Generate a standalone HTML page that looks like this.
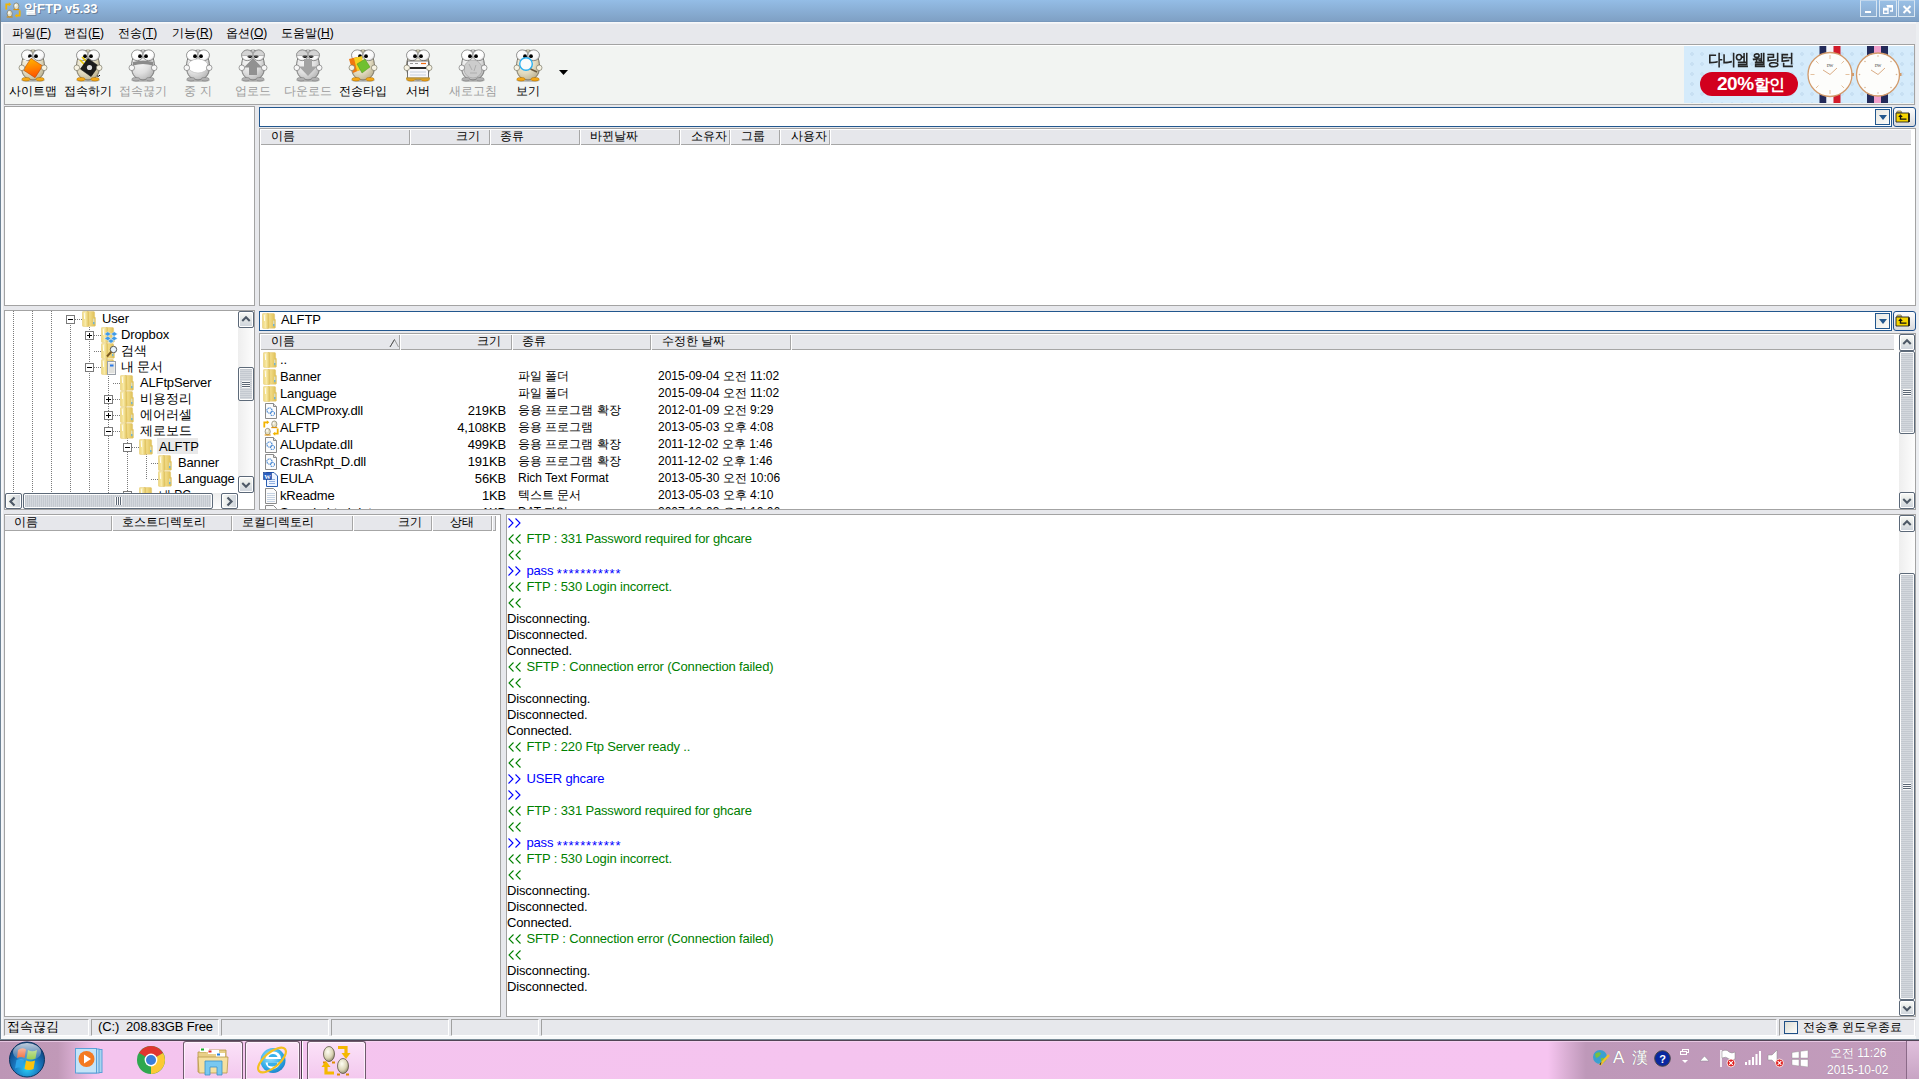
<!DOCTYPE html>
<html><head><meta charset="utf-8">
<style>
*{box-sizing:border-box}
html,body{margin:0;padding:0}
body{width:1919px;height:1079px;overflow:hidden;position:relative;background:#e7e8ec;font-family:"Liberation Sans",sans-serif;font-size:12px;color:#000}
.a{position:absolute}
.t{position:absolute;white-space:nowrap;line-height:14px}
.box{position:absolute;border:1px solid #a3a3a3;background:#fff}
.hd{position:absolute;height:15px;background:#e6e7eb;border-right:1px solid #a6a6a6;border-bottom:1px solid #a6a6a6}
.hdr{position:absolute;height:15px;background:#e6e7eb;border-right:2px solid #b0b0b0;border-bottom:2px solid #a8a8a8;white-space:nowrap;line-height:13px;padding-left:9px}
.lat{font-size:13px;letter-spacing:-.15px}
.sb{position:absolute;border:1px solid #5b6878;border-radius:2px;box-shadow:inset 0 0 0 1px #fff;background:linear-gradient(#fbfbf8 0%,#e9ecea 35%,#cdd3db 100%)}
.sbh{background:linear-gradient(90deg,#fbfbf8 0%,#e9ecea 35%,#cdd3db 100%)}
.tr{position:absolute;background:linear-gradient(90deg,#eeeeee,#fdfdfd)}
.trh{background:linear-gradient(#eeeeee,#fdfdfd)}
.th{position:absolute;border:1px solid #5d6a79;border-radius:2px;box-shadow:inset 0 0 0 1px #fdfdfd;background:repeating-linear-gradient(#d4d8dd 0 1px,#c4c9d0 1px 2px)}
.thh{background:repeating-linear-gradient(90deg,#d4d8dd 0 1px,#c4c9d0 1px 2px)}
.dl{position:absolute;width:1px;background:repeating-linear-gradient(#7a7a7a 0 1px,transparent 1px 2px)}
.dh{position:absolute;height:1px;background:repeating-linear-gradient(90deg,#7a7a7a 0 1px,transparent 1px 2px)}
.cv{vertical-align:-1px;margin-right:1px}
.chv{display:inline-block;letter-spacing:1.2px;transform:translateY(1px) scale(.8,1.55);transform-origin:0 62%;font-weight:normal}
.g{color:#008000}.bl{color:#0000ff}
.dis{color:#a0a0a0}
</style></head><body>

<svg width="0" height="0" style="position:absolute">
<defs>
<linearGradient id="fg1" x1="0" x2="1" y1="0" y2="0"><stop offset="0" stop-color="#eed67a"/><stop offset=".45" stop-color="#f8eaa8"/><stop offset="1" stop-color="#dcbc50"/></linearGradient>
<linearGradient id="fg2" x1="0" x2="1" y1="0" y2="0"><stop offset="0" stop-color="#c8a840"/><stop offset=".3" stop-color="#f2dc88"/><stop offset="1" stop-color="#dcbc50"/></linearGradient>
<radialGradient id="ob" cx=".35" cy=".3" r=".8"><stop offset="0" stop-color="#fbf8ea"/><stop offset=".6" stop-color="#e2dbc0"/><stop offset="1" stop-color="#b8ae8e"/></radialGradient>
<radialGradient id="oe" cx=".4" cy=".35" r=".7"><stop offset="0" stop-color="#fff"/><stop offset=".7" stop-color="#f6f6f6"/><stop offset="1" stop-color="#c8c8c8"/></radialGradient>
<linearGradient id="obk" x1="0" y1="0" x2="1" y2="1"><stop offset="0" stop-color="#ffb400"/><stop offset="1" stop-color="#ff5000"/></linearGradient>
<symbol id="owl" viewBox="0 0 30 34">
<ellipse cx="15" cy="32.6" rx="12" ry="1.6" fill="#000" opacity=".2"/>
<path d="M15 2.5 C23 2.5 26.5 10 26.5 19 C26.5 27 22 32 15 32 C8 32 3.5 27 3.5 19 C3.5 10 7 2.5 15 2.5Z" fill="url(#ob)" stroke="#5e584a" stroke-width=".8"/>
<ellipse cx="8" cy="31.2" rx="4.2" ry="1.8" fill="#f4a818" stroke="#a86a00" stroke-width=".5"/>
<ellipse cx="22" cy="31.2" rx="4.2" ry="1.8" fill="#f4a818" stroke="#a86a00" stroke-width=".5"/>
<ellipse cx="9.3" cy="7.3" rx="5.8" ry="5.4" fill="url(#oe)" stroke="#6a6a6a" stroke-width=".7"/>
<ellipse cx="20.7" cy="7.3" rx="5.8" ry="5.4" fill="url(#oe)" stroke="#6a6a6a" stroke-width=".7"/>
<path d="M13.5 1.8 L15 4.5 L16.5 1.8Z" fill="#f0ead0" stroke="#6a6450" stroke-width=".4"/>
<circle cx="12" cy="8.2" r="1.9" fill="#000"/>
<circle cx="18" cy="8.2" r="1.9" fill="#000"/>
</symbol>
<symbol id="hands" viewBox="0 0 30 34">
<circle cx="3.8" cy="19.8" r="2.8" fill="#f6f2e2" stroke="#6a6654" stroke-width=".6"/>
<circle cx="26.2" cy="19.8" r="2.8" fill="#f6f2e2" stroke="#6a6654" stroke-width=".6"/>
</symbol>
<symbol id="fold" viewBox="0 0 16 16">
<path d="M5 .6 H11.6 Q12.6 .6 12.6 1.6 V6 L13.4 6.6 V14.4 Q13.4 15.2 12.6 15.2 H5Z" fill="url(#fg2)" stroke="#e2c468" stroke-width=".5"/>
<path d="M.4 1.4 Q.4 .4 1.4 .4 H5.4 Q6.6 .4 6.8 1.6 L7.2 14 Q7.2 15.6 5.6 15.6 L1.4 15.4 Q.4 15.4 .4 14.4Z" fill="url(#fg1)" stroke="#e4c870" stroke-width=".5"/>
<path d="M2.2 1.6 L2.6 8" stroke="#fff" stroke-width="1" opacity=".9"/>
<rect x="11.4" y="7.6" width=".9" height="5.4" fill="#d8ecf8"/><rect x="11.4" y="11" width=".9" height="2.2" fill="#2e9ae0"/>
</symbol>
<symbol id="dll" viewBox="0 0 16 16">
<path d="M2.5 .5 H10.5 L13.5 3.5 V15.5 H2.5Z" fill="#fbfbfb" stroke="#8a8a8a"/>
<path d="M10.5 .5 V3.5 H13.5" fill="#e0e0e0" stroke="#8a8a8a"/>
<circle cx="6.5" cy="7.5" r="2.6" fill="none" stroke="#3a7fd0" stroke-width="1.2" stroke-dasharray="1.2 .8"/>
<circle cx="9.5" cy="10.5" r="2" fill="none" stroke="#3a7fd0" stroke-width="1.1" stroke-dasharray="1 .7"/>
</symbol>
<symbol id="txt" viewBox="0 0 16 16">
<path d="M2.5 .5 H10.5 L13.5 3.5 V15.5 H2.5Z" fill="#fbfbfb" stroke="#8a8a8a"/>
<path d="M4 5.5H12M4 7.5H12M4 9.5H12M4 11.5H12M4 13.5H12" stroke="#b8c8dc" stroke-width=".8"/>
</symbol>
<symbol id="doc" viewBox="0 0 16 16">
<path d="M3.5 1.5 H11 L14.5 5 V15.5 H3.5Z" fill="#eef4ff" stroke="#2a5eb0"/>
<path d="M6 8.5H12M6 10.5H12M6 12.5H12" stroke="#7aa0d8" stroke-width=".8"/>
<rect x=".5" y="1.5" width="8" height="7" fill="#2b5fc0" stroke="#1a3f90" stroke-width=".6"/>
<text x="4.5" y="7.6" font-size="6.5" font-weight="bold" fill="#fff" text-anchor="middle" font-family="Liberation Serif">W</text>
</symbol>
<symbol id="alftp" viewBox="0 0 16 16">
<path d="M1.3 7.5 V2.3 H4.5" fill="none" stroke="#f2b400" stroke-width="1.8"/><path d="M3.8 .3 L6.3 2.3 L3.8 4.3Z" fill="#f2b400"/>
<ellipse cx="11.3" cy="4.2" rx="2.6" ry="3.3" fill="#e4dfc4" stroke="#5a5440" stroke-width=".5"/><ellipse cx="10.6" cy="3.3" rx="1" ry="1.4" fill="#fff" opacity=".8"/>
<path d="M8.3 7.6 H14.3" stroke="#e09000" stroke-width="1.1"/>
<ellipse cx="4.7" cy="11.6" rx="2.6" ry="3.3" fill="#e4dfc4" stroke="#5a5440" stroke-width=".5"/><ellipse cx="4" cy="10.7" rx="1" ry="1.4" fill="#fff" opacity=".8"/>
<path d="M1.7 15 H7.7" stroke="#e09000" stroke-width="1.1"/>
<path d="M14.7 8.5 V13.7 H11.5" fill="none" stroke="#f2b400" stroke-width="1.8"/><path d="M12.2 11.7 L9.7 13.7 L12.2 15.7Z" fill="#f2b400"/>
</symbol>
<symbol id="plus" viewBox="0 0 9 9"><rect x=".5" y=".5" width="8" height="8" fill="#fff" stroke="#7a7a7a"/><path d="M2 4.5H7M4.5 2V7" stroke="#000"/></symbol>
<symbol id="minus" viewBox="0 0 9 9"><rect x=".5" y=".5" width="8" height="8" fill="#fff" stroke="#7a7a7a"/><path d="M2 4.5H7" stroke="#000"/></symbol>
</defs></svg>
<!-- window frame -->
<div class="a" style="left:0;top:0;width:1px;height:1040px;background:#6e8294"></div>
<div class="a" style="left:1px;top:21px;width:2px;height:1018px;background:#f6f7f9"></div>
<div class="a" style="left:1916px;top:0;width:3px;height:1040px;background:#eceef1"></div>

<!-- title bar -->
<div class="a" style="left:1px;top:0;width:1918px;height:22px;background:linear-gradient(#94bde6,#7e9fc3)"></div>
<div class="a" style="left:1px;top:21px;width:1918px;height:1px;background:#7898bc"></div>
<div class="t" style="left:24px;top:2px;color:#fff;font-weight:bold;font-size:13px;text-shadow:1px 1px 0 #6a7f97">알FTP v5.33</div>

<div class="a" style="left:1860px;top:0;width:17px;height:17px;border:1px solid #d8e6f2;border-top-color:#c0d6ec;background:rgba(255,255,255,.06)"><div class="a" style="left:4px;top:10px;width:6px;height:2px;background:#fff"></div></div>
<div class="a" style="left:1879px;top:0;width:18px;height:17px;border:1px solid #d8e6f2;border-top-color:#c0d6ec;background:rgba(255,255,255,.06)"><svg class="a" style="left:3px;top:4px" width="10" height="9" viewBox="0 0 10 9"><path d="M3.5 .5 H9.5 V6 H7 M.5 3.5 H5 V8.5 H.5Z" fill="none" stroke="#fff" stroke-width="1.4"/><rect x="4" y="1" width="5" height="1.6" fill="#fff"/><rect x="1" y="4" width="4" height="1.6" fill="#fff"/></svg></div>
<div class="a" style="left:1898px;top:0;width:17px;height:17px;border:1px solid #d8e6f2;border-top-color:#c0d6ec;background:rgba(255,255,255,.06)"><svg class="a" style="left:3px;top:4px" width="10" height="9" viewBox="0 0 10 9"><path d="M1.5 1 L8.5 8 M8.5 1 L1.5 8" stroke="#fff" stroke-width="2"/></svg></div>
<svg class="a" style="left:5px;top:2px" width="16" height="16"><use href="#alftp"/></svg>
<!-- menu -->
<div class="a" style="left:1px;top:22px;width:1915px;height:2px;background:linear-gradient(#fbfbfc,#eeeff2)"></div>
<div class="t" style="left:12px;top:26px">파일(<u>F</u>)</div>
<div class="t" style="left:64px;top:26px">편집(<u>E</u>)</div>
<div class="t" style="left:118px;top:26px">전송(<u>T</u>)</div>
<div class="t" style="left:172px;top:26px">기능(<u>R</u>)</div>
<div class="t" style="left:226px;top:26px">옵션(<u>O</u>)</div>
<div class="t" style="left:281px;top:26px">도움말(<u>H</u>)</div>

<!-- toolbar -->
<div class="box" style="left:4px;top:44px;width:1911px;height:61px;background:#f2f4f2;box-shadow:inset 0 1px 0 #fff"></div>

<!-- toolbar buttons -->
<svg class="a" style="left:18px;top:48px;" width="30" height="34" viewBox="0 0 30 34"><use href="#owl"/><rect x="8" y="13" width="14" height="14" transform="rotate(33 15 20)" fill="url(#obk)" stroke="#b04000" stroke-width=".5"/><path d="M6 13 L14 9" stroke="#fff" stroke-width="1.2"/><use href="#hands"/></svg><div class="t" style="left:-7px;top:84px;width:80px;text-align:center;color:#000">사이트맵</div>
<svg class="a" style="left:73px;top:48px;" width="30" height="34" viewBox="0 0 30 34"><use href="#owl"/><path d="M7 12 L12 17 M9 9 L14 14" stroke="#e8c800" stroke-width="1.6"/><rect x="10" y="13" width="13" height="13" transform="rotate(35 16.5 19.5)" fill="#1c1c1c" stroke="#000" stroke-width=".5"/><circle cx="16.5" cy="19.5" r="2.6" fill="#ddd"/><path d="M24 28 Q26 29 27 27" stroke="#000" fill="none"/><use href="#hands"/></svg><div class="t" style="left:48px;top:84px;width:80px;text-align:center;color:#000">접속하기</div>
<svg class="a" style="left:128px;top:48px; filter:grayscale(1) brightness(1.02);" width="30" height="34" viewBox="0 0 30 34"><use href="#owl"/><path d="M5 14 Q15 11 25 14 L25 17.5 Q15 14.5 5 17.5Z" fill="#888"/><use href="#hands"/></svg><div class="t" style="left:103px;top:84px;width:80px;text-align:center;color:#9c9c9c">접속끊기</div>
<svg class="a" style="left:183px;top:48px; filter:grayscale(1) brightness(1.02);" width="30" height="34" viewBox="0 0 30 34"><use href="#owl"/><ellipse cx="15" cy="18" rx="10" ry="7" fill="#fafafa" stroke="#aaa" stroke-width=".5"/><use href="#hands"/></svg><div class="t" style="left:158px;top:84px;width:80px;text-align:center;color:#9c9c9c">중 지</div>
<svg class="a" style="left:238px;top:48px; filter:grayscale(1) brightness(1.02);" width="30" height="34" viewBox="0 0 30 34"><use href="#owl"/><path d="M3.5 7.6 A5.8 5.4 0 0 1 15.1 7.6Z M14.9 7.6 A5.8 5.4 0 0 1 26.5 7.6Z" fill="#d0d0d0" stroke="#8a8a8a" stroke-width=".6"/><path d="M9.5 8.6 H13.5 M16.5 8.6 H20.5" stroke="#444" stroke-width="1.3"/><path d="M15 10 L24 19.5 H19 V27 H11 V19.5 H6Z" fill="#8e8e8e"/><use href="#hands"/></svg><div class="t" style="left:213px;top:84px;width:80px;text-align:center;color:#9c9c9c">업로드</div>
<svg class="a" style="left:293px;top:48px; filter:grayscale(1) brightness(1.02);" width="30" height="34" viewBox="0 0 30 34"><use href="#owl"/><path d="M3.5 7.6 A5.8 5.4 0 0 1 15.1 7.6Z M14.9 7.6 A5.8 5.4 0 0 1 26.5 7.6Z" fill="#d0d0d0" stroke="#8a8a8a" stroke-width=".6"/><path d="M9.5 8.6 H13.5 M16.5 8.6 H20.5" stroke="#444" stroke-width="1.3"/><path d="M15 28 L24 18.5 H19 V11 H11 V18.5 H6Z" fill="#a0a0a0"/><use href="#hands"/></svg><div class="t" style="left:268px;top:84px;width:80px;text-align:center;color:#9c9c9c">다운로드</div>
<svg class="a" style="left:348px;top:48px;" width="30" height="34" viewBox="0 0 30 34"><use href="#owl"/><path d="M1 11 L9 9 L12 22 L5 25Z" fill="#f07810"/><path d="M6 10 L14 8 L16 21 L9 23Z" fill="#f4d020"/><path d="M9 16 L17 11 L22 19 L14 25Z" fill="#70c030" stroke="#3a8010" stroke-width=".4"/><use href="#hands"/></svg><div class="t" style="left:323px;top:84px;width:80px;text-align:center;color:#000">전송타입</div>
<svg class="a" style="left:403px;top:48px;" width="30" height="34" viewBox="0 0 30 34"><use href="#owl"/><rect x="4.5" y="13" width="21" height="17" fill="#f8f8fa" stroke="#555" stroke-width=".8"/><path d="M7 15.5 H10 M12 15.5 H15" stroke="#999" stroke-width="1"/><path d="M18 15.5 H23" stroke="#f06a10" stroke-width="1.2"/><path d="M7 20 H23" stroke="#111" stroke-width="1.8"/><path d="M7 24 H23 M7 27 H23" stroke="#b8c4d4" stroke-width=".8"/><rect x="3" y="29.5" width="24" height="2" fill="#c89a30"/><use href="#hands"/></svg><div class="t" style="left:378px;top:84px;width:80px;text-align:center;color:#000">서버</div>
<svg class="a" style="left:458px;top:48px; filter:grayscale(1) brightness(1.02);" width="30" height="34" viewBox="0 0 30 34"><use href="#owl"/><circle cx="15" cy="21" r="9" fill="#c8c8c8" stroke="#999" stroke-width=".6"/><path d="M11 16 L14 22 M18 17 L16 23 M12 25 L19 25" stroke="#aaa" stroke-width="1"/><use href="#hands"/></svg><div class="t" style="left:433px;top:84px;width:80px;text-align:center;color:#9c9c9c">새로고침</div>
<svg class="a" style="left:513px;top:48px;" width="30" height="34" viewBox="0 0 30 34"><use href="#owl"/><circle cx="13" cy="16" r="6.3" fill="#fafafa" stroke="#2ab0f0" stroke-width="1.4"/><path d="M17.5 21 L24 24" stroke="#6a5a40" stroke-width="1.5"/><use href="#hands"/></svg><div class="t" style="left:488px;top:84px;width:80px;text-align:center;color:#000">보기</div>
<svg class="a" style="left:559px;top:70px" width="9" height="6" viewBox="0 0 9 6"><path d="M0 0 H9 L4.5 5Z" fill="#000"/></svg>
<!-- banner -->
<div class="a" style="left:1684px;top:46px;width:230px;height:57px;overflow:hidden;background-color:#d5ebfb;background-image:radial-gradient(circle,#c8e0f3 1.6px,transparent 2px);background-size:10px 10px;background-position:3px 3px">
<div class="t" style="left:24px;top:5px;font-size:16px;line-height:18px;font-weight:bold;color:#262626;letter-spacing:-.8px;transform:scaleX(.9);transform-origin:0 0">다니엘 웰링턴</div>
<div class="a" style="left:16px;top:26px;width:98px;height:24px;border-radius:12px;background:#d2001e"></div>
<div class="t" style="left:33px;top:27px;font-size:19px;line-height:22px;font-weight:bold;color:#fff;letter-spacing:-.5px">20%<span style="font-size:16px;font-weight:bold">할인</span></div>
<svg class="a" style="left:110px;top:0" width="120" height="57" viewBox="0 0 120 57">
<rect x="25.5" y="0" width="7" height="57" fill="#232a5a"/><rect x="32.5" y="0" width="7" height="57" fill="#f4f4fa"/><rect x="39.5" y="0" width="7" height="57" fill="#d21a2a"/>
<rect x="73" y="0" width="7" height="57" fill="#232a5a"/><rect x="80" y="0" width="7" height="57" fill="#f0a0cc"/><rect x="87" y="0" width="7" height="57" fill="#232a5a"/>
<circle cx="36" cy="28.5" r="22" fill="#fdfdfb" stroke="#d29a6a" stroke-width="1.3"/><rect x="57.5" y="27" width="2.5" height="3" fill="#d29a6a"/>
<circle cx="84" cy="28.5" r="21.5" fill="#fdfdfb" stroke="#d29a6a" stroke-width="1.3"/><rect x="105" y="27" width="2.5" height="3" fill="#d29a6a"/>
<path d="M36 28.5 L29 24 M36 28.5 L43 22" stroke="#c88850" stroke-width=".7"/><path d="M84 28.5 L77 24 M84 28.5 L91 22" stroke="#c88850" stroke-width=".7"/>
<path d="M36 9 V13 M36 44 V48 M16.5 28.5 H20.5 M51.5 28.5 H55.5 M22 15 L24.5 17.5 M50 15 L47.5 17.5 M22 42 L24.5 39.5 M50 42 L47.5 39.5" stroke="#d8a878" stroke-width=".7"/>
<text x="36" y="21" font-size="4" text-anchor="middle" fill="#333" font-family="Liberation Serif">DW</text><text x="84" y="21" font-size="4" text-anchor="middle" fill="#333" font-family="Liberation Serif">DW</text>
<g fill="#d8b898"><circle cx="84" cy="10" r=".8"/><circle cx="84" cy="47" r=".8"/><circle cx="65.5" cy="28.5" r=".8"/><circle cx="102.5" cy="28.5" r=".8"/><circle cx="71" cy="15.5" r=".8"/><circle cx="97" cy="15.5" r=".8"/><circle cx="71" cy="41.5" r=".8"/><circle cx="97" cy="41.5" r=".8"/></g>
</svg>
</div>
<!-- upper left pane -->
<div class="box" style="left:4px;top:106px;width:251px;height:200px"></div>
<!-- upper address -->
<div class="box" style="left:259px;top:107px;width:1633px;height:20px;border-color:#22578e"></div>
<!-- upper list -->
<div class="box" style="left:259px;top:128px;width:1657px;height:178px"></div>

<!-- upper headers -->
<div class="hd" style="left:261px;top:130px;width:149px"></div><div class="t" style="left:271px;top:129px">이름</div><div class="hd" style="left:411px;top:130px;width:79px"></div><div class="t" style="left:456px;top:129px">크기</div><div class="hd" style="left:491px;top:130px;width:89px"></div><div class="t" style="left:500px;top:129px">종류</div><div class="hd" style="left:581px;top:130px;width:99px"></div><div class="t" style="left:590px;top:129px">바뀐날짜</div><div class="hd" style="left:681px;top:130px;width:49px"></div><div class="t" style="left:691px;top:129px">소유자</div><div class="hd" style="left:731px;top:130px;width:49px"></div><div class="t" style="left:741px;top:129px">그룹</div><div class="hd" style="left:781px;top:130px;width:49px"></div><div class="t" style="left:791px;top:129px">사용자</div><div class="hd" style="left:831px;top:130px;width:1080px;border-right:0"></div>
<!-- tree -->
<div class="box" style="left:4px;top:310px;width:251px;height:200px"></div>
<!-- tree content -->
<div class="a" style="left:5px;top:311px;width:233px;height:182px;overflow:hidden"><div class="dl" style="left:8px;top:0px;height:182px"></div><div class="dl" style="left:27px;top:0px;height:182px"></div><div class="dl" style="left:46px;top:0px;height:182px"></div><div class="dl" style="left:65px;top:12px;height:170px"></div><div class="dl" style="left:84px;top:16px;height:166px"></div><div class="dl" style="left:103px;top:59px;height:123px"></div><div class="dl" style="left:122px;top:123px;height:59px"></div><div class="dl" style="left:141px;top:139px;height:29px"></div><div class="dh" style="left:70px;top:8px;width:7px"></div><svg class="a" style="left:61px;top:4px" width="9" height="9"><use href="#minus"/></svg><svg class="a" style="left:77px;top:0px" width="16" height="16"><use href="#fold"/></svg><div class="t lat" style="left:97px;top:1px">User</div><div class="dh" style="left:89px;top:24px;width:7px"></div><svg class="a" style="left:80px;top:20px" width="9" height="9"><use href="#plus"/></svg><svg class="a" style="left:96px;top:16px" width="16" height="16"><use href="#fold"/></svg><div class="t lat" style="left:116px;top:17px">Dropbox</div><div class="dh" style="left:89px;top:40px;width:7px"></div><svg class="a" style="left:96px;top:32px" width="16" height="16"><use href="#fold"/></svg><div class="t lat" style="left:116px;top:33px">검색</div><div class="dh" style="left:89px;top:56px;width:7px"></div><svg class="a" style="left:80px;top:52px" width="9" height="9"><use href="#minus"/></svg><svg class="a" style="left:96px;top:48px" width="16" height="16"><use href="#fold"/></svg><div class="t lat" style="left:116px;top:49px">내 문서</div><div class="dh" style="left:108px;top:72px;width:7px"></div><svg class="a" style="left:115px;top:64px" width="16" height="16"><use href="#fold"/></svg><div class="t lat" style="left:135px;top:65px">ALFtpServer</div><div class="dh" style="left:108px;top:88px;width:7px"></div><svg class="a" style="left:99px;top:84px" width="9" height="9"><use href="#plus"/></svg><svg class="a" style="left:115px;top:80px" width="16" height="16"><use href="#fold"/></svg><div class="t lat" style="left:135px;top:81px">비용정리</div><div class="dh" style="left:108px;top:104px;width:7px"></div><svg class="a" style="left:99px;top:100px" width="9" height="9"><use href="#plus"/></svg><svg class="a" style="left:115px;top:96px" width="16" height="16"><use href="#fold"/></svg><div class="t lat" style="left:135px;top:97px">에어러셀</div><div class="dh" style="left:108px;top:120px;width:7px"></div><svg class="a" style="left:99px;top:116px" width="9" height="9"><use href="#minus"/></svg><svg class="a" style="left:115px;top:112px" width="16" height="16"><use href="#fold"/></svg><div class="t lat" style="left:135px;top:113px">제로보드</div><div class="dh" style="left:127px;top:136px;width:7px"></div><svg class="a" style="left:118px;top:132px" width="9" height="9"><use href="#minus"/></svg><svg class="a" style="left:134px;top:128px" width="16" height="16"><use href="#fold"/></svg><div class="a" style="left:152px;top:127px;width:41px;height:16px;background:#e9e9e9"></div><div class="t lat" style="left:154px;top:129px">ALFTP</div><div class="dh" style="left:146px;top:152px;width:7px"></div><svg class="a" style="left:153px;top:144px" width="16" height="16"><use href="#fold"/></svg><div class="t lat" style="left:173px;top:145px">Banner</div><div class="dh" style="left:146px;top:168px;width:7px"></div><svg class="a" style="left:153px;top:160px" width="16" height="16"><use href="#fold"/></svg><div class="t lat" style="left:173px;top:161px">Language</div><div class="dh" style="left:127px;top:184px;width:7px"></div><svg class="a" style="left:118px;top:180px" width="9" height="9"><use href="#minus"/></svg><svg class="a" style="left:134px;top:176px" width="16" height="16"><use href="#fold"/></svg><div class="t" style="left:154px;top:177px">내 PC</div></div>
<svg class="a" style="left:104px;top:331px" width="14" height="13" viewBox="0 0 14 13"><g fill="#3d9ae8" stroke="#fff" stroke-width=".4"><path d="M.5 3 L3.8 .8 L7 3 L3.8 5.2Z"/><path d="M7 3 L10.2 .8 L13.5 3 L10.2 5.2Z"/><path d="M.5 7.4 L3.8 5.2 L7 7.4 L3.8 9.6Z"/><path d="M7 7.4 L10.2 5.2 L13.5 7.4 L10.2 9.6Z"/><path d="M3.8 10 L7 8 L10.2 10 L7 12.2Z"/></g></svg><svg class="a" style="left:106px;top:345px" width="12" height="13" viewBox="0 0 12 13"><circle cx="7.5" cy="4.5" r="3.2" fill="#e8f4ff" stroke="#555" stroke-width="1"/><path d="M5.3 6.8 L1 11.5" stroke="#7a5a20" stroke-width="2"/></svg><svg class="a" style="left:107px;top:361px" width="9" height="14" viewBox="0 0 9 14"><rect x=".5" y=".5" width="8" height="13" fill="#f6f6f4" stroke="#9aa0a8"/><path d="M1.5 3H7.5M1.5 5H7.5M1.5 7H7.5M1.5 9H7.5M1.5 11H7.5" stroke="#b8b8b0" stroke-width=".7"/><rect x="3" y="3.5" width="3.5" height="2" fill="#2a7ae8"/></svg><div class="tr" style="left:238px;top:311px;width:16px;height:182px"></div><div class="sb" style="left:238px;top:311px;width:16px;height:17px"><svg class="a" style="left:0;top:0" width="14" height="15" viewBox="0 0 15 14"><path d="M3.5 8.5 L7.5 4.5 L11.5 8.5" fill="none" stroke="#4d5866" stroke-width="2.2"/></svg></div><div class="th" style="left:238px;top:367px;width:16px;height:34px"><div class="a" style="left:3px;top:13px;width:8px;height:7px;background:repeating-linear-gradient(#fafafa 0 1px,#5b6674 1px 2px)"></div></div><div class="sb" style="left:238px;top:476px;width:16px;height:17px"><svg class="a" style="left:0;top:0" width="14" height="15" viewBox="0 0 15 14"><path d="M3.5 5.5 L7.5 9.5 L11.5 5.5" fill="none" stroke="#4d5866" stroke-width="2.2"/></svg></div><div class="tr trh" style="left:5px;top:493px;width:233px;height:16px"></div><div class="sb sbh" style="left:5px;top:493px;width:17px;height:16px"><svg class="a" style="left:0;top:0" width="15" height="14" viewBox="0 0 15 14"><path d="M8.5 3.5 L4.5 7.5 L8.5 11.5" fill="none" stroke="#4d5866" stroke-width="2.2"/></svg></div><div class="th thh" style="left:23px;top:493px;width:190px;height:16px"><div class="a" style="left:91px;top:3px;width:7px;height:8px;background:repeating-linear-gradient(90deg,#fafafa 0 1px,#5b6674 1px 2px)"></div></div><div class="sb sbh" style="left:221px;top:493px;width:17px;height:16px"><svg class="a" style="left:0;top:0" width="15" height="14" viewBox="0 0 15 14"><path d="M5.5 3.5 L9.5 7.5 L5.5 11.5" fill="none" stroke="#4d5866" stroke-width="2.2"/></svg></div>
<!-- lower address -->
<div class="box" style="left:259px;top:311px;width:1633px;height:20px;border-color:#22578e"></div>
<!-- lower list -->
<div class="box" style="left:259px;top:333px;width:1657px;height:177px"></div>

<!-- lower headers -->
<div class="hd" style="left:261px;top:335px;width:139px"></div><div class="t" style="left:271px;top:334px">이름</div><div class="hd" style="left:401px;top:335px;width:111px"></div><div class="t" style="left:477px;top:334px">크기</div><div class="hd" style="left:513px;top:335px;width:138px"></div><div class="t" style="left:522px;top:334px">종류</div><div class="hd" style="left:652px;top:335px;width:139px"></div><div class="t" style="left:662px;top:334px">수정한 날짜</div><div class="hd" style="left:792px;top:335px;width:1102px;border-right:0"></div>
<!-- lower rows -->
<div class="a" style="left:260px;top:350px;width:1638px;height:159px;overflow:hidden">
<svg class="a" style="left:3px;top:2px" width="16" height="16"><use href="#fold"/></svg><div class="t lat" style="left:20px;top:3px">..</div>
<svg class="a" style="left:3px;top:19px" width="16" height="16"><use href="#fold"/></svg><div class="t lat" style="left:20px;top:20px">Banner</div><div class="t" style="left:258px;top:19px">파일 폴더</div><div class="t" style="left:398px;top:19px">2015-09-04 오전 11:02</div>
<svg class="a" style="left:3px;top:36px" width="16" height="16"><use href="#fold"/></svg><div class="t lat" style="left:20px;top:37px">Language</div><div class="t" style="left:258px;top:36px">파일 폴더</div><div class="t" style="left:398px;top:36px">2015-09-04 오전 11:02</div>
<svg class="a" style="left:3px;top:53px" width="16" height="16"><use href="#dll"/></svg><div class="t lat" style="left:20px;top:54px">ALCMProxy.dll</div><div class="t lat" style="left:150px;top:54px;width:96px;text-align:right">219KB</div><div class="t" style="left:258px;top:53px">응용 프로그램 확장</div><div class="t" style="left:398px;top:53px">2012-01-09 오전 9:29</div>
<svg class="a" style="left:3px;top:70px" width="16" height="16"><use href="#alftp"/></svg><div class="t lat" style="left:20px;top:71px">ALFTP</div><div class="t lat" style="left:150px;top:71px;width:96px;text-align:right">4,108KB</div><div class="t" style="left:258px;top:70px">응용 프로그램</div><div class="t" style="left:398px;top:70px">2013-05-03 오후 4:08</div>
<svg class="a" style="left:3px;top:87px" width="16" height="16"><use href="#dll"/></svg><div class="t lat" style="left:20px;top:88px">ALUpdate.dll</div><div class="t lat" style="left:150px;top:88px;width:96px;text-align:right">499KB</div><div class="t" style="left:258px;top:87px">응용 프로그램 확장</div><div class="t" style="left:398px;top:87px">2011-12-02 오후 1:46</div>
<svg class="a" style="left:3px;top:104px" width="16" height="16"><use href="#dll"/></svg><div class="t lat" style="left:20px;top:105px">CrashRpt_D.dll</div><div class="t lat" style="left:150px;top:105px;width:96px;text-align:right">191KB</div><div class="t" style="left:258px;top:104px">응용 프로그램 확장</div><div class="t" style="left:398px;top:104px">2011-12-02 오후 1:46</div>
<svg class="a" style="left:3px;top:121px" width="16" height="16"><use href="#doc"/></svg><div class="t lat" style="left:20px;top:122px">EULA</div><div class="t lat" style="left:150px;top:122px;width:96px;text-align:right">56KB</div><div class="t" style="left:258px;top:121px">Rich Text Format</div><div class="t" style="left:398px;top:121px">2013-05-30 오전 10:06</div>
<svg class="a" style="left:3px;top:138px" width="16" height="16"><use href="#txt"/></svg><div class="t lat" style="left:20px;top:139px">kReadme</div><div class="t lat" style="left:150px;top:139px;width:96px;text-align:right">1KB</div><div class="t" style="left:258px;top:138px">텍스트 문서</div><div class="t" style="left:398px;top:138px">2013-05-03 오후 4:10</div>
<svg class="a" style="left:3px;top:155px" width="16" height="16"><use href="#txt"/></svg><div class="t lat" style="left:20px;top:156px">Sample.html.dat</div><div class="t lat" style="left:150px;top:156px;width:96px;text-align:right">1KB</div><div class="t" style="left:258px;top:155px">DAT 파일</div><div class="t" style="left:398px;top:155px">2007-12-03 오전 10:06</div>
</div>
<div class="tr" style="left:1899px;top:334px;width:16px;height:175px"></div><div class="sb" style="left:1899px;top:334px;width:16px;height:17px"><svg class="a" style="left:0;top:0" width="14" height="15" viewBox="0 0 15 14"><path d="M3.5 8.5 L7.5 4.5 L11.5 8.5" fill="none" stroke="#4d5866" stroke-width="2.2"/></svg></div><div class="th" style="left:1899px;top:351px;width:16px;height:83px"><div class="a" style="left:3px;top:37px;width:8px;height:7px;background:repeating-linear-gradient(#fafafa 0 1px,#5b6674 1px 2px)"></div></div><div class="sb" style="left:1899px;top:492px;width:16px;height:17px"><svg class="a" style="left:0;top:0" width="14" height="15" viewBox="0 0 15 14"><path d="M3.5 5.5 L7.5 9.5 L11.5 5.5" fill="none" stroke="#4d5866" stroke-width="2.2"/></svg></div>
<svg class="a" style="left:262px;top:313px" width="16" height="16"><use href="#fold"/></svg><div class="t lat" style="left:281px;top:313px">ALFTP</div>
<div class="a" style="left:389px;top:337px;width:10px;height:10px"><svg width="10" height="10" viewBox="0 0 10 10"><path d="M1 9 L5.5 1.5 L9.5 9" fill="none" stroke="#9a9a9a"/><path d="M1 9 L5.5 1.5" stroke="#555"/></svg></div>
<div class="a" style="left:1875px;top:109px;width:15px;height:16px;border:1px solid #22578e;background:linear-gradient(135deg,#e8e8e4,#fbfbf8)"><svg class="a" style="left:2px;top:4px" width="10" height="7" viewBox="0 0 10 7"><path d="M1 1 H9 L5 6Z" fill="#22578e"/></svg></div>
<div class="a" style="left:1893px;top:107px;width:23px;height:20px;border:1px solid #1e4f8a;border-radius:3px;background:linear-gradient(#fdfdfd,#d8dade)"><svg class="a" style="left:1px;top:2px" width="15" height="13" viewBox="0 0 15 13"><path d="M1.5 2.5 L2.5 1 H6 L7 2.5 Z" fill="#e8d060" stroke="#555" stroke-width=".6"/><path d="M1 3 H14 V12 H1Z" fill="#f5d400" stroke="#222" stroke-width=".9"/><path d="M14 3.5 V12" stroke="#000" stroke-width="1.4"/><path d="M5.5 4.2 L3.2 7 H4.8 V9.8 H11.5 V8.6 H6.2 V7 H7.8Z" fill="#111"/></svg></div>
<div class="a" style="left:1875px;top:313px;width:15px;height:16px;border:1px solid #22578e;background:linear-gradient(135deg,#e8e8e4,#fbfbf8)"><svg class="a" style="left:2px;top:4px" width="10" height="7" viewBox="0 0 10 7"><path d="M1 1 H9 L5 6Z" fill="#22578e"/></svg></div>
<div class="a" style="left:1893px;top:311px;width:23px;height:20px;border:1px solid #1e4f8a;border-radius:3px;background:linear-gradient(#fdfdfd,#d8dade)"><svg class="a" style="left:1px;top:2px" width="15" height="13" viewBox="0 0 15 13"><path d="M1.5 2.5 L2.5 1 H6 L7 2.5 Z" fill="#e8d060" stroke="#555" stroke-width=".6"/><path d="M1 3 H14 V12 H1Z" fill="#f5d400" stroke="#222" stroke-width=".9"/><path d="M14 3.5 V12" stroke="#000" stroke-width="1.4"/><path d="M5.5 4.2 L3.2 7 H4.8 V9.8 H11.5 V8.6 H6.2 V7 H7.8Z" fill="#111"/></svg></div>
<!-- queue -->
<div class="box" style="left:4px;top:514px;width:497px;height:503px"></div>
<!-- log -->
<div class="box" style="left:506px;top:514px;width:1410px;height:503px"></div>

<div class="tr" style="left:1899px;top:515px;width:16px;height:501px"></div><div class="sb" style="left:1899px;top:515px;width:16px;height:17px"><svg class="a" style="left:0;top:0" width="14" height="15" viewBox="0 0 15 14"><path d="M3.5 8.5 L7.5 4.5 L11.5 8.5" fill="none" stroke="#4d5866" stroke-width="2.2"/></svg></div><div class="th" style="left:1899px;top:573px;width:16px;height:427px"><div class="a" style="left:3px;top:209px;width:8px;height:7px;background:repeating-linear-gradient(#fafafa 0 1px,#5b6674 1px 2px)"></div></div><div class="sb" style="left:1899px;top:1000px;width:16px;height:16px"><svg class="a" style="left:0;top:0" width="14" height="14" viewBox="0 0 15 14"><path d="M3.5 5.5 L7.5 9.5 L11.5 5.5" fill="none" stroke="#4d5866" stroke-width="2.2"/></svg></div>
<!-- log lines -->
<div class="t lat bl" style="left:508px;top:516px"><svg class="cv" width="14" height="10" viewBox="0 0 14 10"><path d="M.5 .5 L5 5 L.5 9.5 M7.5 .5 L12 5 L7.5 9.5" fill="none" stroke="currentColor" stroke-width="1.1"/></svg></div>
<div class="t lat g" style="left:508px;top:532px"><svg class="cv" width="14" height="10" viewBox="0 0 14 10"><path d="M5.5 .5 L1 5 L5.5 9.5 M12.5 .5 L8 5 L12.5 9.5" fill="none" stroke="currentColor" stroke-width="1.1"/></svg> FTP : 331 Password required for ghcare</div>
<div class="t lat g" style="left:508px;top:548px"><svg class="cv" width="14" height="10" viewBox="0 0 14 10"><path d="M5.5 .5 L1 5 L5.5 9.5 M12.5 .5 L8 5 L12.5 9.5" fill="none" stroke="currentColor" stroke-width="1.1"/></svg></div>
<div class="t lat bl" style="left:508px;top:564px"><svg class="cv" width="14" height="10" viewBox="0 0 14 10"><path d="M.5 .5 L5 5 L.5 9.5 M7.5 .5 L12 5 L7.5 9.5" fill="none" stroke="currentColor" stroke-width="1.1"/></svg> pass <span style="position:relative;top:3px;font-size:13px;letter-spacing:.8px">***********</span></div>
<div class="t lat g" style="left:508px;top:580px"><svg class="cv" width="14" height="10" viewBox="0 0 14 10"><path d="M5.5 .5 L1 5 L5.5 9.5 M12.5 .5 L8 5 L12.5 9.5" fill="none" stroke="currentColor" stroke-width="1.1"/></svg> FTP : 530 Login incorrect.</div>
<div class="t lat g" style="left:508px;top:596px"><svg class="cv" width="14" height="10" viewBox="0 0 14 10"><path d="M5.5 .5 L1 5 L5.5 9.5 M12.5 .5 L8 5 L12.5 9.5" fill="none" stroke="currentColor" stroke-width="1.1"/></svg></div>
<div class="t lat k" style="left:507px;top:612px">Disconnecting.</div>
<div class="t lat k" style="left:507px;top:628px">Disconnected.</div>
<div class="t lat k" style="left:507px;top:644px">Connected.</div>
<div class="t lat g" style="left:508px;top:660px"><svg class="cv" width="14" height="10" viewBox="0 0 14 10"><path d="M5.5 .5 L1 5 L5.5 9.5 M12.5 .5 L8 5 L12.5 9.5" fill="none" stroke="currentColor" stroke-width="1.1"/></svg> SFTP : Connection error (Connection failed)</div>
<div class="t lat g" style="left:508px;top:676px"><svg class="cv" width="14" height="10" viewBox="0 0 14 10"><path d="M5.5 .5 L1 5 L5.5 9.5 M12.5 .5 L8 5 L12.5 9.5" fill="none" stroke="currentColor" stroke-width="1.1"/></svg></div>
<div class="t lat k" style="left:507px;top:692px">Disconnecting.</div>
<div class="t lat k" style="left:507px;top:708px">Disconnected.</div>
<div class="t lat k" style="left:507px;top:724px">Connected.</div>
<div class="t lat g" style="left:508px;top:740px"><svg class="cv" width="14" height="10" viewBox="0 0 14 10"><path d="M5.5 .5 L1 5 L5.5 9.5 M12.5 .5 L8 5 L12.5 9.5" fill="none" stroke="currentColor" stroke-width="1.1"/></svg> FTP : 220 Ftp Server ready ..</div>
<div class="t lat g" style="left:508px;top:756px"><svg class="cv" width="14" height="10" viewBox="0 0 14 10"><path d="M5.5 .5 L1 5 L5.5 9.5 M12.5 .5 L8 5 L12.5 9.5" fill="none" stroke="currentColor" stroke-width="1.1"/></svg></div>
<div class="t lat bl" style="left:508px;top:772px"><svg class="cv" width="14" height="10" viewBox="0 0 14 10"><path d="M.5 .5 L5 5 L.5 9.5 M7.5 .5 L12 5 L7.5 9.5" fill="none" stroke="currentColor" stroke-width="1.1"/></svg> USER ghcare</div>
<div class="t lat bl" style="left:508px;top:788px"><svg class="cv" width="14" height="10" viewBox="0 0 14 10"><path d="M.5 .5 L5 5 L.5 9.5 M7.5 .5 L12 5 L7.5 9.5" fill="none" stroke="currentColor" stroke-width="1.1"/></svg></div>
<div class="t lat g" style="left:508px;top:804px"><svg class="cv" width="14" height="10" viewBox="0 0 14 10"><path d="M5.5 .5 L1 5 L5.5 9.5 M12.5 .5 L8 5 L12.5 9.5" fill="none" stroke="currentColor" stroke-width="1.1"/></svg> FTP : 331 Password required for ghcare</div>
<div class="t lat g" style="left:508px;top:820px"><svg class="cv" width="14" height="10" viewBox="0 0 14 10"><path d="M5.5 .5 L1 5 L5.5 9.5 M12.5 .5 L8 5 L12.5 9.5" fill="none" stroke="currentColor" stroke-width="1.1"/></svg></div>
<div class="t lat bl" style="left:508px;top:836px"><svg class="cv" width="14" height="10" viewBox="0 0 14 10"><path d="M.5 .5 L5 5 L.5 9.5 M7.5 .5 L12 5 L7.5 9.5" fill="none" stroke="currentColor" stroke-width="1.1"/></svg> pass <span style="position:relative;top:3px;font-size:13px;letter-spacing:.8px">***********</span></div>
<div class="t lat g" style="left:508px;top:852px"><svg class="cv" width="14" height="10" viewBox="0 0 14 10"><path d="M5.5 .5 L1 5 L5.5 9.5 M12.5 .5 L8 5 L12.5 9.5" fill="none" stroke="currentColor" stroke-width="1.1"/></svg> FTP : 530 Login incorrect.</div>
<div class="t lat g" style="left:508px;top:868px"><svg class="cv" width="14" height="10" viewBox="0 0 14 10"><path d="M5.5 .5 L1 5 L5.5 9.5 M12.5 .5 L8 5 L12.5 9.5" fill="none" stroke="currentColor" stroke-width="1.1"/></svg></div>
<div class="t lat k" style="left:507px;top:884px">Disconnecting.</div>
<div class="t lat k" style="left:507px;top:900px">Disconnected.</div>
<div class="t lat k" style="left:507px;top:916px">Connected.</div>
<div class="t lat g" style="left:508px;top:932px"><svg class="cv" width="14" height="10" viewBox="0 0 14 10"><path d="M5.5 .5 L1 5 L5.5 9.5 M12.5 .5 L8 5 L12.5 9.5" fill="none" stroke="currentColor" stroke-width="1.1"/></svg> SFTP : Connection error (Connection failed)</div>
<div class="t lat g" style="left:508px;top:948px"><svg class="cv" width="14" height="10" viewBox="0 0 14 10"><path d="M5.5 .5 L1 5 L5.5 9.5 M12.5 .5 L8 5 L12.5 9.5" fill="none" stroke="currentColor" stroke-width="1.1"/></svg></div>
<div class="t lat k" style="left:507px;top:964px">Disconnecting.</div>
<div class="t lat k" style="left:507px;top:980px">Disconnected.</div>
<!-- queue headers -->
<div class="hd" style="left:5px;top:516px;width:107px"></div><div class="t" style="left:14px;top:515px">이름</div><div class="hd" style="left:113px;top:516px;width:119px"></div><div class="t" style="left:122px;top:515px">호스트디렉토리</div><div class="hd" style="left:233px;top:516px;width:120px"></div><div class="t" style="left:242px;top:515px">로컬디렉토리</div><div class="hd" style="left:354px;top:516px;width:78px"></div><div class="t" style="left:398px;top:515px">크기</div><div class="hd" style="left:433px;top:516px;width:59px"></div><div class="t" style="left:450px;top:515px">상태</div><div class="hd" style="left:493px;top:516px;width:3px"></div>
<!-- status bar -->
<div class="a" style="left:1px;top:1036px;width:1915px;height:3px;background:#f8f9fa"></div>
<div class="a" style="left:0;top:1039px;width:1919px;height:1px;background:#7a8c98"></div><div class="a" style="left:0;top:1040px;width:1919px;height:1px;background:#524456"></div>

<div class="a" style="left:4px;top:1019px;width:85px;height:17px;border-left:1px solid #a0a0a0;border-top:1px solid #a0a0a0;border-right:1px solid #fff;border-bottom:1px solid #fff"></div><div class="t lat" style="left:7px;top:1020px">접속끊김</div><div class="a" style="left:91px;top:1019px;width:128px;height:17px;border-left:1px solid #a0a0a0;border-top:1px solid #a0a0a0;border-right:1px solid #fff;border-bottom:1px solid #fff"></div><div class="t lat" style="left:98px;top:1020px">(C:)&nbsp;&nbsp;208.83GB Free</div><div class="a" style="left:221px;top:1019px;width:108px;height:17px;border-left:1px solid #a0a0a0;border-top:1px solid #a0a0a0;border-right:1px solid #fff;border-bottom:1px solid #fff"></div><div class="a" style="left:331px;top:1019px;width:118px;height:17px;border-left:1px solid #a0a0a0;border-top:1px solid #a0a0a0;border-right:1px solid #fff;border-bottom:1px solid #fff"></div><div class="a" style="left:451px;top:1019px;width:88px;height:17px;border-left:1px solid #a0a0a0;border-top:1px solid #a0a0a0;border-right:1px solid #fff;border-bottom:1px solid #fff"></div><div class="a" style="left:541px;top:1019px;width:1236px;height:17px;border-left:1px solid #a0a0a0;border-top:1px solid #a0a0a0;border-right:1px solid #fff;border-bottom:1px solid #fff"></div><div class="a" style="left:1779px;top:1019px;width:136px;height:17px;border-left:1px solid #a0a0a0;border-top:1px solid #a0a0a0;border-right:1px solid #fff;border-bottom:1px solid #fff"></div><div class="a" style="left:1784px;top:1021px;width:14px;height:13px;border:1px solid #1f4f86;background:linear-gradient(135deg,#dcdcd4,#fdfdfb)"></div><div class="t" style="left:1803px;top:1020px">전송후 윈도우종료</div>
<!-- taskbar -->
<div class="a" style="left:0;top:1041px;width:1919px;height:38px;background:linear-gradient(90deg,#bd96b6 0px,#c199b8 58px,#f4c4ee 95px,#f6c4f0 1548px,#dcb0d6 1565px,#be98b9 1586px,#c39cbc 1919px)"></div>
<div class="a" style="left:0;top:1041px;width:1919px;height:1px;background:#f6d8f2;opacity:.7"></div>
<svg class="a" style="left:8px;top:1041px" width="38" height="37" viewBox="0 0 38 37">
<defs><radialGradient id="orb" cx=".5" cy=".75" r=".7"><stop offset="0" stop-color="#28d0f8"/><stop offset=".5" stop-color="#1a78c0"/><stop offset="1" stop-color="#0c3c78"/></radialGradient>
<linearGradient id="orbh" x1="0" y1="0" x2="0" y2="1"><stop offset="0" stop-color="#fff" stop-opacity=".75"/><stop offset="1" stop-color="#fff" stop-opacity=".05"/></linearGradient></defs>
<circle cx="19" cy="18.5" r="17.5" fill="url(#orb)" stroke="#0c3560" stroke-width="1"/>
<path d="M10 9 Q14 6 18 8.5 L16.5 17 Q13 15 9 17Z" fill="#f05a22"/><path d="M20 9 Q24 11.5 29 9 L27.5 17.5 Q23 19.5 18.5 17.5Z" fill="#8cc63e"/>
<path d="M8.5 19 Q12.5 17 16 19 L14.5 27.5 Q11 25.5 7 27.5Z" fill="#2ba3e8"/><path d="M18 19.5 Q22.5 21.5 27 19.5 L25.5 28 Q21 30 16.5 28Z" fill="#fcc30c"/>
<ellipse cx="19" cy="11" rx="14" ry="9" fill="url(#orbh)"/>
</svg>
<svg class="a" style="left:75px;top:1048px" width="30" height="27" viewBox="0 0 30 27">
<rect x="6" y="1.5" width="21" height="23" fill="#a8d4f0" stroke="#5aa0d8"/><rect x="3" y="1" width="21" height="24" fill="#b8ddf4" stroke="#5aa0d8"/><rect x=".5" y=".5" width="21" height="24.5" fill="#c4e4f8" stroke="#5aa0d8"/>
<circle cx="11.5" cy="11" r="8" fill="#f47a20"/><path d="M9 6.5 L16 11 L9 15.5Z" fill="#fff"/>
</svg>
<svg class="a" style="left:137px;top:1046px" width="28" height="28" viewBox="0 0 28 28">
<circle cx="14" cy="14" r="14" fill="#2fa84f"/>
<path d="M14 14 L26.1 7 A14 14 0 0 0 1.9 7Z" fill="#e0352f"/>
<path d="M14 14 L26.1 7 A14 14 0 0 1 14 28Z" fill="#fcc934"/>
<path d="M14 14 L1.9 7 L7.3 17.3Z" fill="#2fa84f"/>
<circle cx="14" cy="14" r="6.4" fill="#fff"/><circle cx="14" cy="14" r="5" fill="#3a7fd8"/>
</svg>
<div class="a" style="left:183px;top:1041px;width:60px;height:38px;border:1px solid #6e5a6c;border-bottom:0;border-radius:3px 3px 0 0;box-shadow:inset 0 0 0 1px rgba(255,255,255,.6);background:linear-gradient(#fbe2f8,#f3c8ee)"></div>
<div class="a" style="left:245px;top:1041px;width:55px;height:38px;border:1px solid #6e5a6c;border-bottom:0;border-radius:3px 3px 0 0;box-shadow:inset 0 0 0 1px rgba(255,255,255,.6);background:linear-gradient(#fbe2f8,#f3c8ee)"></div>
<div class="a" style="left:301px;top:1041px;width:2px;height:38px;border-left:1px solid #4a3a4a;border-right:1px solid #fff"></div>
<div class="a" style="left:307px;top:1041px;width:59px;height:38px;border:1px solid #6e5a6c;border-bottom:0;border-radius:3px 3px 0 0;box-shadow:inset 0 0 0 1px rgba(255,255,255,.6);background:linear-gradient(#fbe2f8,#f3c8ee)"></div>
<svg class="a" style="left:196px;top:1046px" width="34" height="31" viewBox="0 0 34 31">
<path d="M2 6 H10 L12 4 H30 V26 H2Z" fill="#e8cf88" stroke="#b89848" stroke-width=".8"/>
<rect x="4" y="2" width="9" height="4" fill="#fff"/><rect x="5" y="2.5" width="3" height="2" fill="#20b030"/>
<rect x="12" y="4" width="11" height="4" fill="#fff"/><rect x="12.5" y="4.5" width="3" height="2" fill="#e03030"/>
<rect x="20" y="7" width="9" height="4" fill="#fff"/><rect x="21" y="7.5" width="3" height="2" fill="#2080e0"/>
<path d="M2 11 H32 L31 27 H3Z" fill="#f6e0a0" stroke="#b89848" stroke-width=".8"/>
<path d="M9 15 H26 V29 H21 V21 H14 V29 H9Z" fill="#78c8f0" stroke="#3a90c8" stroke-width=".8"/>
</svg>
<svg class="a" style="left:255px;top:1043px" width="34" height="33" viewBox="0 0 34 33">
<defs><radialGradient id="ieg" cx=".4" cy=".35" r=".7"><stop offset="0" stop-color="#a8e8ff"/><stop offset=".6" stop-color="#38b0ea"/><stop offset="1" stop-color="#1a80c8"/></radialGradient></defs>
<circle cx="18" cy="17.5" r="12.5" fill="url(#ieg)"/>
<path d="M10.5 16 H26 Q25.5 8.5 18 8.5 Q11 8.5 10.5 16Z" fill="#fff"/>
<path d="M13.5 14 Q14.5 11 18 11 Q21.5 11 22.5 14Z" fill="#38b0ea"/>
<path d="M10.5 19.5 H25.5 Q23.5 26 17.5 26 Q12 26 10.5 19.5Z" fill="#fff"/>
<path d="M13 22.5 Q17.5 24.5 22 22.5 L22.2 19.5 H12.8Z" fill="#38b0ea"/>
<ellipse cx="17" cy="17" rx="17" ry="7.5" transform="rotate(-40 17 17)" fill="none" stroke="#f5c020" stroke-width="2.2"/>
</svg>
<svg class="a" style="left:320px;top:1044px" width="32" height="32" viewBox="0 0 32 32">
<defs><radialGradient id="egg" cx=".4" cy=".35" r=".7"><stop offset="0" stop-color="#fffef4"/><stop offset=".6" stop-color="#dcd6b8"/><stop offset="1" stop-color="#8a8468"/></radialGradient></defs>
<ellipse cx="9" cy="10" rx="5.5" ry="7.5" fill="url(#egg)" stroke="#4a4430" stroke-width=".7"/><path d="M3 18.5 H6 M12 18.5 H15" stroke="#e08a00" stroke-width="2"/>
<ellipse cx="23" cy="22" rx="5.5" ry="7.5" fill="url(#egg)" stroke="#4a4430" stroke-width=".7"/><path d="M17 30.5 H20 M26 30.5 H29" stroke="#e08a00" stroke-width="2"/>
<path d="M18 3.5 H26 V10" fill="none" stroke="#f5b800" stroke-width="3.2"/><path d="M21.5 9 H30.5 L26 15Z" fill="#f5b800"/>
<path d="M14 29 H6 V22" fill="none" stroke="#f5b800" stroke-width="3.2"/><path d="M1.5 23 H10.5 L6 17Z" fill="#f5b800"/>
</svg>
<svg class="a" style="left:1592px;top:1049px" width="19" height="18" viewBox="0 0 19 18"><circle cx="8" cy="8" r="7" fill="#3aa0d0"/><path d="M3 5 Q6 2 9 4 Q8 8 4 9Z M9 9 Q13 8 14 11 Q11 14 9 12Z" fill="#78c040"/><path d="M8 16 L17 6" stroke="#f0c030" stroke-width="2.5"/><path d="M8 16 L9 13.5" stroke="#333" stroke-width="1"/></svg>
<div class="t" style="left:1613px;top:1048px;font-size:17px;line-height:20px;color:#fff;text-shadow:0 0 1px #777">A</div>
<div class="t" style="left:1632px;top:1048px;font-size:16px;line-height:20px;color:#fff;text-shadow:0 0 1px #777">漢</div>
<svg class="a" style="left:1654px;top:1050px" width="17" height="17" viewBox="0 0 17 17"><circle cx="8.5" cy="8.5" r="7.8" fill="#0a28a0" stroke="#444" stroke-width="1"/><text x="8.5" y="13" font-size="11" font-weight="bold" fill="#fff" text-anchor="middle" font-family="Liberation Sans">?</text></svg>
<svg class="a" style="left:1680px;top:1048px" width="11" height="18" viewBox="0 0 11 18"><rect x="2.5" y="1.5" width="6" height="3" fill="none" stroke="#fff"/><rect x=".5" y="3.5" width="6" height="3" fill="#c49cbc" stroke="#fff"/><path d="M2 12 H8 L5 15Z" fill="#fff"/></svg>
<svg class="a" style="left:1699px;top:1055px" width="11" height="7" viewBox="0 0 11 7"><path d="M1 6 L5.5 1 L10 6Z" fill="#fff" stroke="#8a8090" stroke-width=".5"/></svg>
<svg class="a" style="left:1719px;top:1049px" width="18" height="19" viewBox="0 0 18 19"><path d="M2 1 V18" stroke="#fff" stroke-width="1.6"/><path d="M3 2 Q8 0 10 3 Q13 5 16 3 V10 Q13 12 10 10 Q7 7 3 9Z" fill="#fff" stroke="#888" stroke-width=".5"/><circle cx="12" cy="14" r="4" fill="#e02020" stroke="#fff" stroke-width=".8"/><path d="M10.2 12.2 L13.8 15.8 M13.8 12.2 L10.2 15.8" stroke="#fff" stroke-width="1.2"/></svg>
<svg class="a" style="left:1744px;top:1050px" width="17" height="16" viewBox="0 0 17 16"><rect x="1" y="12" width="2" height="3" fill="#fff"/><rect x="4.5" y="10" width="2" height="5" fill="#fff"/><rect x="8" y="7" width="2" height="8" fill="#fff"/><rect x="11.5" y="4" width="2" height="11" fill="#fff"/><rect x="15" y="1" width="2" height="14" fill="#fff"/></svg>
<svg class="a" style="left:1767px;top:1049px" width="18" height="19" viewBox="0 0 18 19"><path d="M1 6 H5 L10 1 V16 L5 11 H1Z" fill="#fff" stroke="#888" stroke-width=".5"/><circle cx="12.5" cy="14" r="4" fill="#e02020" stroke="#fff" stroke-width=".8"/><path d="M10.7 12.2 L14.3 15.8 M14.3 12.2 L10.7 15.8" stroke="#fff" stroke-width="1.2"/></svg>
<svg class="a" style="left:1791px;top:1050px" width="18" height="17" viewBox="0 0 18 17"><path d="M1 2.5 L8 1.5 V8 H1Z M9.5 1.3 L17 .3 V8 H9.5Z M1 9.5 H8 V16 L1 15Z M9.5 9.5 H17 V17 L9.5 16Z" fill="#fff" stroke="#8a8a8a" stroke-width=".4"/></svg>
<div class="t" style="left:1830px;top:1046px;font-size:12px;color:#fff;text-shadow:0 0 1px #a080a0">오전 11:26</div>
<div class="t" style="left:1827px;top:1063px;font-size:12px;color:#fff;text-shadow:0 0 1px #a080a0">2015-10-02</div>
<div class="a" style="left:1906px;top:1041px;width:13px;height:38px;border-left:1px solid #8a6a88;background:linear-gradient(#e0c0dc,#c8a4c4)"></div>
</body></html>
